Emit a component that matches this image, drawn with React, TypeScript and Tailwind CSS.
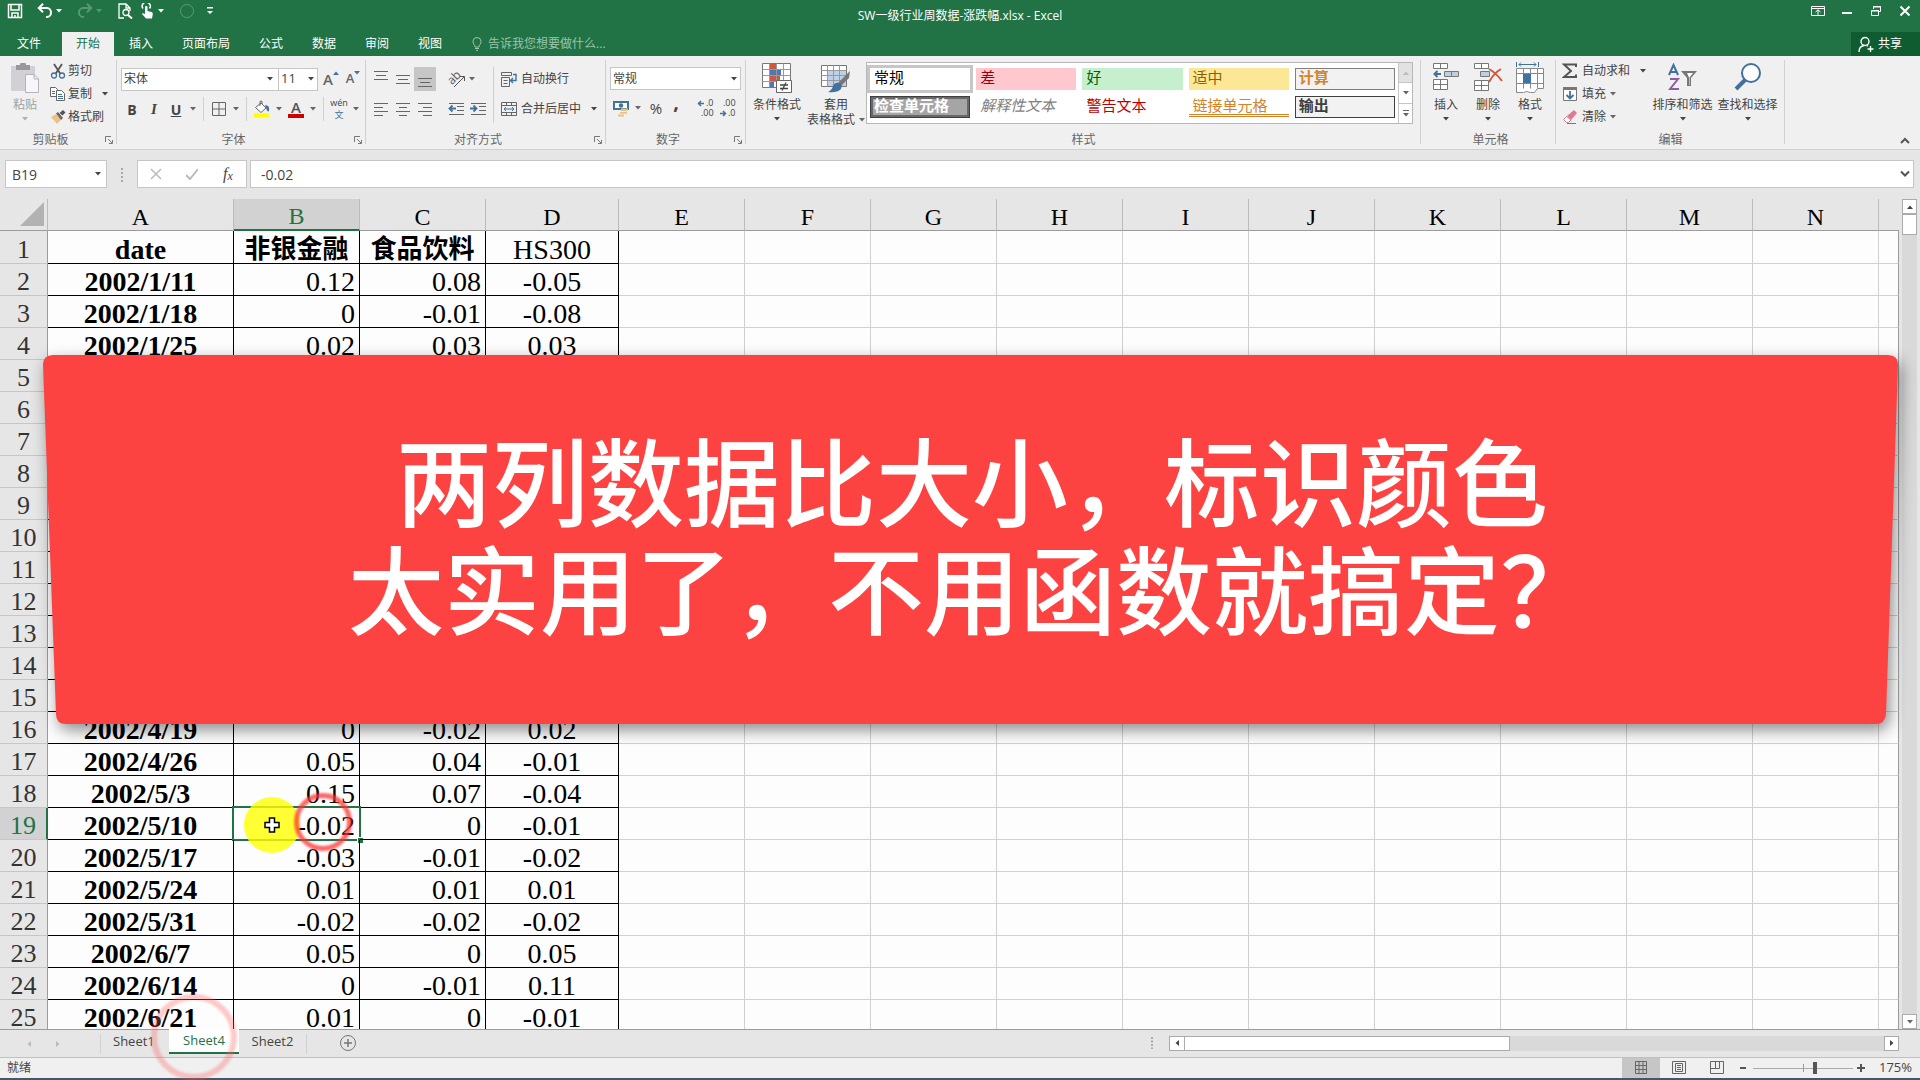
import React from 'react';

const COLUMNS = [
  { name: 'A', width: 'w-[186px]' },
  { name: 'B', width: 'w-[126px]' },
  { name: 'C', width: 'w-[126px]' },
  { name: 'D', width: 'w-[133px]' },
  { name: 'E', width: 'w-[126px]' },
  { name: 'F', width: 'w-[126px]' },
  { name: 'G', width: 'w-[126px]' },
  { name: 'H', width: 'w-[126px]' },
  { name: 'I', width: 'w-[126px]' },
  { name: 'J', width: 'w-[126px]' },
  { name: 'K', width: 'w-[126px]' },
  { name: 'L', width: 'w-[126px]' },
  { name: 'M', width: 'w-[126px]' },
  { name: 'N', width: 'w-[126px]' },
];

const ROWS: Record<number, string[]> = {
  1: ['date', '非银金融', '食品饮料', 'HS300'],
  2: ['2002/1/11', '0.12', '0.08', '-0.05'],
  3: ['2002/1/18', '0', '-0.01', '-0.08'],
  4: ['2002/1/25', '0.02', '0.03', '0.03'],
  16: ['2002/4/19', '0', '-0.02', '0.02'],
  17: ['2002/4/26', '0.05', '0.04', '-0.01'],
  18: ['2002/5/3', '0.15', '0.07', '-0.04'],
  19: ['2002/5/10', '-0.02', '0', '-0.01'],
  20: ['2002/5/17', '-0.03', '-0.01', '-0.02'],
  21: ['2002/5/24', '0.01', '0.01', '0.01'],
  22: ['2002/5/31', '-0.02', '-0.02', '-0.02'],
  23: ['2002/6/7', '0.05', '0', '0.05'],
  24: ['2002/6/14', '0', '-0.01', '0.11'],
  25: ['2002/6/21', '0.01', '0', '-0.01'],
};

const ROW_NUMBERS = Array.from({ length: 25 }, (_, i) => i + 1);

const Caret: React.FC<{ className?: string }> = ({ className = 'text-[#666]' }) => (
  <svg viewBox="0 0 6 4" className={`w-1.5 h-1 shrink-0 ${className}`}>
    <path d="M0 0h6L3 3.5z" fill="currentColor" />
  </svg>
);

const Sep: React.FC<{ className?: string }> = ({ className = 'h-6' }) => (
  <div className={`w-px shrink-0 bg-[#d0d0d0] ${className}`} />
);

interface IconButtonProps {
  label: string;
  className?: string;
  children: React.ReactNode;
}

const IconButton: React.FC<IconButtonProps> = ({ label, className = 'w-[22px]', children }) => (
  <button aria-label={label} className={`flex h-6 shrink-0 items-center justify-center ${className}`}>
    {children}
  </button>
);

interface GroupProps {
  title: string;
  className: string;
  launcher?: boolean;
  children: React.ReactNode;
}

const Group: React.FC<GroupProps> = ({ title, className, launcher, children }) => (
  <section className={`relative flex shrink-0 flex-col pt-[3px] ${className}`}>
    <div className="flex h-[73px]">{children}</div>
    <div className="flex h-4 items-center text-[#666]">
      <h2 className="flex-1 text-center">{title}</h2>
      {launcher && (
        <button aria-label={`${title}设置`} className="w-4 pl-1">
          <svg viewBox="0 0 8 8" className="w-2 h-2" fill="none" stroke="#777">
            <path d="M.5 6V.5H6M3 3l4 4M7.5 4v3.5H4" />
          </svg>
        </button>
      )}
    </div>
    <Sep className="absolute right-0 top-1 h-[84px]" />
  </section>
);

const LineIcon: React.FC<{ d: string }> = ({ d }) => (
  <svg viewBox="0 0 16 16" className="w-4 h-4" fill="none" stroke="#666">
    <path d={d} />
  </svg>
);

const TitleBar: React.FC = () => (
  <div className="relative flex h-8 items-start justify-between text-white">
    <div className="flex h-[22px] items-center pl-1">
      <IconButton label="保存">
        <svg viewBox="0 0 16 16" className="w-4 h-4" fill="none" stroke="white" strokeWidth="1.5">
          <path d="M1.5 1.5h13v13h-13zM4 1.5v5.5h8V1.5M5 14.5V10h6v4.5M8 12v2.5" />
        </svg>
      </IconButton>
      <IconButton label="撤消" className="ml-2 w-[22px]">
        <svg viewBox="0 0 16 16" className="w-4 h-4" fill="none" stroke="white" strokeWidth="2">
          <path d="M1.5 5H10a4 4.5 0 0 1 0 9H9M6 .8L1.8 5 6 9.2" />
        </svg>
      </IconButton>
      <Caret className="text-white" />
      <IconButton label="恢复" className="ml-3 w-[22px] opacity-25">
        <svg viewBox="0 0 16 16" className="w-4 h-4" fill="none" stroke="white" strokeWidth="2">
          <path d="M14.5 5H6a4 4.5 0 0 0 0 9h1M10 .8L14.2 5 10 9.2" />
        </svg>
      </IconButton>
      <Caret className="text-white/25" />
      <IconButton label="打印预览" className="ml-3 w-[22px]">
        <svg viewBox="0 0 16 16" className="w-4 h-4" fill="none" stroke="white" strokeWidth="1.3">
          <path d="M7 15H2V1h7l4 4v3M9 1v4h4" />
          <circle cx="9" cy="9.5" r="3" />
          <path d="M11 12l4 3.5" strokeWidth="2" />
        </svg>
      </IconButton>
      <IconButton label="触摸模式">
        <svg viewBox="0 0 14 16" className="w-3.5 h-4">
          <path d="M3 5.5a4 4 0 1 1 6.5 0" fill="none" stroke="white" strokeWidth="1.5" />
          <path d="M5 3.5q1.3-1.2 2.5 0V8l4 1q1.5.5 1.3 2L12 15.5H6L2 11q.5-1.5 3 0z" fill="white" />
        </svg>
      </IconButton>
      <Caret className="text-white" />
      <IconButton label="形状" className="ml-3 w-[22px] opacity-25">
        <span className="h-3.5 w-3.5 rounded-full border border-white" />
      </IconButton>
      <IconButton label="自定义快速访问工具栏" className="ml-px w-[22px]">
        <svg viewBox="0 0 8 8" className="w-2 h-2" fill="white">
          <path d="M1 0h6v1.5H1zM1 4h6L4 7z" />
        </svg>
      </IconButton>
    </div>
    <h1 className="absolute left-1/2 top-2 -translate-x-1/2 leading-4">SW一级行业周数据-涨跌幅.xlsx - Excel</h1>
    <div className="flex h-[22px] items-center gap-[7px] pr-1">
      <IconButton label="功能区显示选项">
        <svg viewBox="0 0 14 12" className="w-3.5 h-3" fill="none" stroke="white">
          <path d="M.5 1.5h13v9H.5zM.5 3.5h13M7 10V5M4.5 7L7 4.8 9.5 7" />
        </svg>
      </IconButton>
      <IconButton label="最小化">
        <svg viewBox="0 0 10 10" className="w-2.5 h-2.5"><path d="M0 6h10v2H0z" fill="white" /></svg>
      </IconButton>
      <IconButton label="还原">
        <svg viewBox="0 0 12 12" className="w-3 h-3" fill="none" stroke="white">
          <path d="M3.5 4V1.5h7v5H8M3 2h8M1.5 5.5h7v5h-7zM1 6h8" />
        </svg>
      </IconButton>
      <IconButton label="关闭">
        <svg viewBox="0 0 12 12" className="w-3 h-3"><path d="M1.5 1.5l9 9M10.5 1.5l-9 9" stroke="white" strokeWidth="2" /></svg>
      </IconButton>
    </div>
  </div>
);

const TabBar: React.FC = () => (
  <div className="flex h-6 items-stretch text-white">
    <button className="mr-1 w-[58px]">文件</button>
    <nav className="flex gap-px">
      <button className="bg-[#f0f0f0] px-3.5 text-[#217346]">开始</button>
      {['插入', '页面布局', '公式', '数据', '审阅', '视图'].map((tab) => (
        <button key={tab} className="px-3.5">{tab}</button>
      ))}
    </nav>
    <label className="ml-4 flex items-center gap-1.5 text-[#9cc4ab]">
      <svg viewBox="0 0 10 14" className="w-2.5 h-3.5" fill="none" stroke="currentColor">
        <path d="M3 10C3 8 1 7 1 4.5a4 4 0 0 1 8 0C9 7 7 8 7 10zM3 11.5h4M4 13.3h2" />
      </svg>
      <input placeholder="告诉我您想要做什么..." className="w-36 bg-transparent outline-none placeholder:text-[#9cc4ab]" />
    </label>
    <button className="ml-auto flex w-[69px] items-center gap-1 bg-[#0e5c2f] pl-[7px]">
      <svg viewBox="0 0 16 16" className="w-4 h-4" fill="none" stroke="white" strokeWidth="1.4">
        <circle cx="7" cy="5.5" r="4" />
        <path d="M1 16c0-4 2-6 5-6.5M9 9.5l1 .5M12.5 10v6M9.5 13h6" />
      </svg>
      共享
    </button>
  </div>
);

const ClipboardGroup: React.FC = () => (
  <Group title="剪贴板" className="w-[117px]" launcher>
    <button className="flex w-[50px] flex-col items-center pt-1 text-[#a0a0a0]">
      <svg viewBox="0 0 30 30" className="w-[30px] h-[30px]">
        <path d="M1 3h24v25H1z" fill="#d2d0d4" />
        <path d="M6 2h4a3 3 0 0 1 6 0h4v5H6z" fill="#99979b" />
        <path d="M15.5 11.5H24l4.5 4.5v13.5h-13z" fill="#f8f6fa" stroke="#b5b2b8" />
        <path d="M24 11.5V16h4.5" fill="none" stroke="#b5b2b8" />
      </svg>
      <span className="mt-1 leading-4">粘贴</span>
      <Caret className="mt-1 text-[#b0b0b0]" />
    </button>
    <div className="flex flex-col">
      <button className="flex h-[23px] items-center gap-0.5">
        <svg viewBox="0 0 16 16" className="w-4 h-4" fill="none">
          <path d="M4 1l6.5 10M12 1L5.5 11" stroke="#555" strokeWidth="1.8" />
          <circle cx="4" cy="12.5" r="2.5" stroke="#41719c" strokeWidth="1.3" />
          <circle cx="12" cy="12.5" r="2.5" stroke="#41719c" strokeWidth="1.3" />
        </svg>
        剪切
      </button>
      <button className="flex h-[23px] items-center gap-0.5">
        <svg viewBox="0 0 16 16" className="w-4 h-4" fill="#fff" stroke="#666">
          <path d="M.5 1.5h5l2 2v7h-7zM2 5.5h3M2 7.5h3" />
          <path d="M6.5 4.5h5l3 3v7h-8z" />
          <path d="M8 8.5h4M8 10.5h5M8 12.5h5" stroke="#41719c" />
        </svg>
        复制
        <Caret className="ml-2" />
      </button>
      <button className="flex h-[23px] items-center gap-0.5">
        <svg viewBox="0 0 16 16" className="w-4 h-4">
          <path d="M1 8l5-3 5 6-4 4z" fill="#edc182" />
          <path d="M6 4.5l2-1.5 5 6-2 2z" fill="#666" />
          <path d="M9.5 4L13 1l2.5 2.5-3 3z" fill="#555" />
        </svg>
        格式刷
      </button>
    </div>
  </Group>
);

const FontGroup: React.FC = () => (
  <Group title="字体" className="w-[249px]" launcher>
    <div className="flex flex-col pl-1 pt-2">
      <div className="flex items-center">
        <div className="relative flex items-center">
          <select aria-label="字体名称" className="h-[23px] w-[158px] appearance-none border border-[#c6c6c6] bg-white px-0.5 outline-none">
            <option>宋体</option>
          </select>
          <Caret className="pointer-events-none absolute right-1.5" />
        </div>
        <div className="relative -ml-px flex items-center">
          <select aria-label="字号" className="h-[23px] w-10 appearance-none border border-[#c6c6c6] bg-white px-0.5 text-[13px] outline-none">
            <option>11</option>
          </select>
          <Caret className="pointer-events-none absolute right-1" />
        </div>
        <IconButton label="增大字号" className="ml-0.5 w-[22px] text-[15px] font-semibold text-[#666]">
          A<Caret className="mb-3 rotate-180 text-[#41719c]" />
        </IconButton>
        <IconButton label="减小字号" className="w-[22px] text-[13px] font-semibold text-[#666]">
          A<Caret className="mb-3 text-[#41719c]" />
        </IconButton>
      </div>
      <div className="flex items-center pt-1.5 text-[14px]">
        <IconButton label="加粗"><b>B</b></IconButton>
        <IconButton label="倾斜"><i className="font-['Liberation_Serif',serif] text-[15px] font-bold">I</i></IconButton>
        <IconButton label="下划线"><u className="font-bold">U</u></IconButton>
        <IconButton label="下划线选项" className="w-3"><Caret /></IconButton>
        <Sep className="mx-1 h-6" />
        <IconButton label="边框">
          <svg viewBox="0 0 14 14" className="w-3.5 h-3.5" fill="none" stroke="#666">
            <path d="M.5.5h13v13H.5zM7 .5v13M.5 7h13" />
          </svg>
        </IconButton>
        <IconButton label="边框选项" className="w-3"><Caret /></IconButton>
        <Sep className="mx-1 h-6" />
        <IconButton label="填充颜色">
          <svg viewBox="0 0 18 18" className="w-[18px] h-[18px]">
            <path d="M2.5 7.5L8 3l5 5-5 4.5z" fill="#fff" stroke="#666" />
            <path d="M7 6V1.5a1.5 1.5 0 0 1 2 0V4" fill="none" stroke="#666" />
            <path d="M12 5q5 0 4 6-1 1-2-.5z" fill="#41719c" />
            <path d="M1 13.5h15V17.5H1z" fill="#ffff00" />
          </svg>
        </IconButton>
        <IconButton label="填充颜色选项" className="w-3"><Caret /></IconButton>
        <IconButton label="字体颜色">
          <span className="w-4 border-b-4 border-[#d00000] text-center text-[15px] font-semibold leading-[14px] text-[#555]">A</span>
        </IconButton>
        <IconButton label="字体颜色选项" className="w-3"><Caret /></IconButton>
        <Sep className="mx-1 h-6" />
        <IconButton label="拼音指南">
          <span className="flex flex-col text-center text-[9px] leading-3">
            <span>wén</span>
            <span className="text-[#41719c]">文</span>
          </span>
        </IconButton>
        <IconButton label="拼音指南选项" className="w-3"><Caret /></IconButton>
      </div>
    </div>
  </Group>
);

const AlignGroup: React.FC = () => (
  <Group title="对齐方式" className="w-[240px]" launcher>
    <div className="flex flex-col gap-1.5 pl-1 pt-2">
      <div className="flex items-center">
        <IconButton label="顶端对齐"><LineIcon d="M1 .5h14M3 4.5h10M1 8.5h14" /></IconButton>
        <IconButton label="垂直居中"><LineIcon d="M1 4.5h14M3 8.5h10M1 12.5h14" /></IconButton>
        <IconButton label="底端对齐" className="w-[22px] bg-[#c6c6c6]"><LineIcon d="M1 7.5h14M3 11.5h10M1 15.5h14" /></IconButton>
        <Sep className="mx-1" />
        <IconButton label="方向" className="w-6">
          <svg viewBox="0 0 18 18" className="w-[18px] h-[18px] overflow-visible">
            <text x="0" y="12" fontSize="12" fill="#555" transform="rotate(-45 6 9)">ab</text>
            <path d="M6 17L16 7M12 6.5h4.5V11" fill="none" stroke="#555" />
          </svg>
        </IconButton>
        <Caret />
      </div>
      <div className="flex items-center">
        <IconButton label="左对齐"><LineIcon d="M1 2.5h14M1 6.5h9M1 10.5h14M1 14.5h9" /></IconButton>
        <IconButton label="居中"><LineIcon d="M1 2.5h14M4 6.5h8M1 10.5h14M4 14.5h8" /></IconButton>
        <IconButton label="右对齐"><LineIcon d="M1 2.5h14M6 6.5h9M1 10.5h14M6 14.5h9" /></IconButton>
        <Sep className="mx-1" />
        <IconButton label="减少缩进量">
          <svg viewBox="0 0 16 14" className="w-4 h-3.5" fill="none" stroke="#666">
            <path d="M1 1.5h15M9 4.5h7M9 8.5h7M1 12.5h15" />
            <path d="M8 6.5H2M4.5 3.5l-3 3 3 3" stroke="#41719c" strokeWidth="1.8" />
          </svg>
        </IconButton>
        <IconButton label="增加缩进量">
          <svg viewBox="0 0 16 14" className="w-4 h-3.5" fill="none" stroke="#666">
            <path d="M1 1.5h15M9 4.5h7M9 8.5h7M1 12.5h15" />
            <path d="M0 6.5h6M3.5 3.5l3 3-3 3" stroke="#41719c" strokeWidth="1.8" />
          </svg>
        </IconButton>
      </div>
    </div>
    <Sep className="ml-1 mt-2 h-14" />
    <div className="flex flex-col gap-1.5 pl-[7px] pt-2">
      <button className="flex h-6 items-center gap-1">
        <svg viewBox="0 0 16 16" className="w-4 h-4" fill="none" stroke="#666">
          <path d="M.5 1.5h10v3H.5zM.5 6.5h8v9h-8zM2.5 9.5h4M2.5 12.5h4" />
          <path d="M12 3.5h3v6h-5M12 7l-2.5 2.5L12 12" stroke="#41719c" strokeWidth="1.4" />
        </svg>
        自动换行
      </button>
      <button className="flex h-6 items-center gap-1">
        <svg viewBox="0 0 16 16" className="w-4 h-4" fill="none" stroke="#666">
          <path d="M.5 1.5h15v13H.5zM.5 4.5h15M.5 11.5h15M5.5 1.5v3M10.5 1.5v3M5.5 11.5v3M10.5 11.5v3" />
          <path d="M3 8h10M5 6L3 8l2 2M11 6l2 2-2 2" stroke="#41719c" />
        </svg>
        合并后居中
        <Caret className="ml-1.5" />
      </button>
    </div>
  </Group>
);

const NumberGroup: React.FC = () => (
  <Group title="数字" className="w-[140px]" launcher>
    <div className="flex flex-col gap-1.5 pl-1 pt-2">
      <div className="relative flex items-center">
        <select aria-label="数字格式" className="h-[23px] w-[131px] appearance-none border border-[#c6c6c6] bg-white px-0.5 outline-none">
          <option>常规</option>
        </select>
        <Caret className="pointer-events-none absolute right-1" />
      </div>
      <div className="flex items-center">
        <IconButton label="会计数字格式">
          <svg viewBox="0 0 18 18" className="w-[18px] h-[18px]">
            <path d="M1 2h16v9H1z" fill="#41719c" />
            <path d="M3 4h12v5H3z" fill="#fff" />
            <circle cx="9" cy="6.5" r="2.2" fill="#41719c" />
            <path d="M9 9.5h7v2.5H9zM8 13h7v1.8H8zM6 15.5h6v2H6z" fill="#edc182" />
          </svg>
        </IconButton>
        <IconButton label="会计格式选项" className="w-3"><Caret /></IconButton>
        <IconButton label="百分比样式" className="ml-0.5 w-5 text-[15px]">%</IconButton>
        <IconButton label="千位分隔样式" className="w-5 pb-3 text-[20px] font-bold">,</IconButton>
        <Sep className="mx-1" />
        <IconButton label="增加小数位数">
          <svg viewBox="0 0 20 24" className="w-5 h-6 overflow-visible" fontSize="9" fill="#444">
            <path d="M8 7.5H3M5 5L2.5 7.5 5 10" fill="none" stroke="#41719c" strokeWidth="1.5" />
            <text x="10" y="10">.0</text>
            <text x="5" y="20">.00</text>
          </svg>
        </IconButton>
        <IconButton label="减少小数位数">
          <svg viewBox="0 0 20 24" className="w-5 h-6 overflow-visible" fontSize="9" fill="#444">
            <text x="5" y="10">.00</text>
            <path d="M2 17.5h5M5 15l2.5 2.5L5 20" fill="none" stroke="#41719c" strokeWidth="1.5" />
            <text x="10" y="20">.0</text>
          </svg>
        </IconButton>
      </div>
    </div>
  </Group>
);

const STYLES = [
  { name: '常规', className: 'border-transparent bg-white text-black outline-[3px] outline-[#c6c6c6]' },
  { name: '差', className: 'border-transparent bg-[#ffc7ce] text-[#9c0006]' },
  { name: '好', className: 'border-transparent bg-[#c6efce] text-[#006100]' },
  { name: '适中', className: 'border-transparent bg-[#fbe796] text-[#8c6000]' },
  { name: '计算', className: 'border-[#7f7f7f] bg-[#f2f2f2] font-bold text-[#d5832b]' },
  { name: '检查单元格', className: 'border-[#3f3f3f] bg-[#a5a5a5] font-bold text-white inset-ring-2 inset-ring-[#3f3f3f]/60' },
  { name: '解释性文本', className: 'border-transparent italic text-[#7f7f7f]' },
  { name: '警告文本', className: 'border-transparent text-[#c00000]' },
  { name: '链接单元格', className: 'border-transparent text-[#d5832b]', underline: true },
  { name: '输出', className: 'border-[#3f3f3f] bg-[#f2f2f2] font-bold text-[#3f3f3f]' },
];

const StylesGroup: React.FC = () => (
  <Group title="样式" className="w-[675px]">
    <button className="ml-1 flex w-[54px] flex-col items-center pt-1">
      <svg viewBox="0 0 30 30" className="w-[30px] h-[30px]">
        <path d="M.5.5h28v24H.5z" fill="#fff" stroke="#777" />
        <path d="M8 1h6v5H8zM8 13h10v5H8z" fill="#d0583c" />
        <path d="M8 7h11v5H8zM8 19h4v5H8z" fill="#4a7ab5" />
        <path d="M.5 6.5h28M.5 12.5h28M.5 18.5h28M7.5.5v24M14.5.5v24M21.5.5v24" stroke="#999" fill="none" />
        <path d="M14.5 17.5h15v12h-15z" fill="#fff" stroke="#666" />
        <path d="M18 22h8M18 25.5h8M24 19.5l-4 8" stroke="#444" strokeWidth="1.3" />
      </svg>
      <span className="mt-1 whitespace-nowrap leading-4">条件格式</span>
      <Caret className="mt-1" />
    </button>
    <button className="ml-0.5 flex w-[60px] flex-col items-center pt-1">
      <svg viewBox="0 0 30 30" className="w-[30px] h-[30px]">
        <path d="M.5 2.5h25v21H.5z" fill="#fff" stroke="#777" />
        <path d="M6 8h19v15H6z" fill="#bdd2e8" />
        <path d="M.5 7.5h25M.5 12.5h25M.5 17.5h25M6.5 2.5v21M12.5 2.5v21M18.5 2.5v21" stroke="#999" fill="none" />
        <path d="M29 8l-1 7-8 8-3-3z" fill="#777" />
        <path d="M18 20q4 1 2 6-4 4-13 3 4-2 5-6 2-4 6-3z" fill="#41719c" />
      </svg>
      <span className="mt-1 leading-4">套用</span>
      <span className="-mt-px flex items-center gap-1 whitespace-nowrap leading-4">表格格式<Caret /></span>
    </button>
    <div className="mr-2 mt-[3px] flex h-[62px] flex-1 border border-[#b8b8b8] bg-white">
      <div className="grid flex-1 grid-cols-5 grid-rows-2 gap-1.5 px-[3px] py-[5px]">
        {STYLES.map((s) => (
          <button key={s.name} className={`flex flex-col items-start justify-between border px-[3px] text-[15px] leading-4 ${s.className}`}>
            {s.name}
            {s.underline && <span className="-mx-1 h-[3px] self-stretch border-y border-[#d5832b]" />}
          </button>
        ))}
      </div>
      <div className="flex w-3.5 flex-col border-l border-[#c6c6c6]">
        <button aria-label="向上" className="flex flex-1 items-center justify-center bg-[#e2e2e2]"><Caret className="rotate-180 text-[#bbb]" /></button>
        <button aria-label="向下" className="flex flex-1 items-center justify-center border-y border-[#c6c6c6]"><Caret /></button>
        <button aria-label="其他" className="flex flex-1 flex-col items-center justify-center gap-0.5"><span className="h-px w-1.5 bg-[#666]" /><Caret /></button>
      </div>
    </div>
  </Group>
);

const BigButton: React.FC<{ text: string; className: string; children: React.ReactNode }> = ({ text, className, children }) => (
  <button className={`flex shrink-0 flex-col items-center pt-1 ${className}`}>
    {children}
    <span className="mt-1 whitespace-nowrap leading-4">{text}</span>
    <Caret className="mt-1" />
  </button>
);

const CellsGroup: React.FC = () => (
  <Group title="单元格" className="w-[135px] pl-1">
    <BigButton text="插入" className="w-[42px]">
      <svg viewBox="0 0 30 30" className="w-[30px] h-[30px]" fill="#fff" stroke="#777">
        <path d="M2.5.5h14v5h-14zM9.5.5v5M2.5 16.5h14v10h-14zM9.5 16.5v10M2.5 21.5h14" />
        <path d="M13.5 8.5h14v5h-14zM20.5 8.5v5" fill="#bdcfe0" />
        <path d="M10 11H4M6.5 8L3.5 11l3 3" fill="none" stroke="#41719c" strokeWidth="2" />
      </svg>
    </BigButton>
    <BigButton text="删除" className="w-[42px]">
      <svg viewBox="0 0 30 30" className="w-[30px] h-[30px]" fill="#fff" stroke="#777">
        <path d="M1.5.5h14v5h-14zM8.5.5v5M1.5 17.5h14v10h-14zM8.5 17.5v10M1.5 22.5h14" />
        <path d="M7.5 8.5h9v5h-9z" fill="#bdcfe0" />
        <path d="M16 6q7 4 13 12M28 6q-7 4-12 13" fill="none" stroke="#d0583c" strokeWidth="2" />
      </svg>
    </BigButton>
    <BigButton text="格式" className="w-[42px]">
      <svg viewBox="0 0 30 30" className="w-[30px] h-[30px] overflow-visible" fill="#fff" stroke="#888">
        <path d="M1.5 5.5h27v20h-6l-3 4h-4l-4-1-3 1h-7z" />
        <path d="M1.5 10.5h27M1.5 20.5h27M8.5 5.5v20M15.5 5.5v20M22.5 5.5v20" fill="none" />
        <path d="M8 11h8v9H8z" fill="#41719c" stroke="none" />
        <path d="M1.5-1v5M23.5-1v5M4 1.5h17M6-.5L4 1.5l2 2M19-.5l2 2-2 2" fill="none" stroke="#41719c" />
      </svg>
    </BigButton>
  </Group>
);

const EditGroup: React.FC = () => (
  <Group title="编辑" className="w-[229px]">
    <div className="flex w-[94px] flex-col pl-1.5">
      <button className="flex h-[23px] items-center gap-1">
        <svg viewBox="0 0 16 16" className="w-4 h-4" fill="none" stroke="#555" strokeWidth="2">
          <path d="M14 4V1.5H2L9 8l-7 6h12v-2.5" />
        </svg>
        自动求和
        <Caret className="ml-1.5" />
      </button>
      <button className="flex h-[23px] items-center gap-1">
        <svg viewBox="0 0 16 16" className="w-4 h-4">
          <path d="M1.5 1.5h13v13h-13z" fill="#fff" stroke="#777" />
          <path d="M1 1h14v3H1z" fill="#777" />
          <path d="M8 5v7M4.5 9L8 12.5 11.5 9" fill="none" stroke="#41719c" strokeWidth="1.8" />
        </svg>
        填充
        <Caret />
      </button>
      <button className="flex h-[23px] items-center gap-1">
        <svg viewBox="0 0 16 16" className="w-4 h-4">
          <path d="M5 7l7-6 3 3-6 7z" fill="#e07a92" />
          <path d="M4.5 7.5L1.5 10.5l3 3h2l2.5-2.5z" fill="#fff" stroke="#e07a92" />
          <path d="M5 14.5h9" stroke="#777" />
        </svg>
        清除
        <Caret />
      </button>
    </div>
    <BigButton text="排序和筛选" className="w-[65px]">
      <svg viewBox="0 0 30 30" className="w-[30px] h-[30px]" fill="none">
        <path d="M1 12L5.5 2 10 12M2.5 9h6" stroke="#41719c" strokeWidth="2" />
        <path d="M2 16h8L2 26h9" stroke="#8e5ba8" strokeWidth="2" />
        <path d="M13 8h16l-6 7v8h-4v-8z" fill="#777" />
        <path d="M19 10h6l-3.5 4.5V22h-.5v-7.5z" fill="#fff" />
      </svg>
    </BigButton>
    <BigButton text="查找和选择" className="w-[65px]">
      <svg viewBox="0 0 30 30" className="w-[30px] h-[30px]">
        <path d="M12 17L3 26" stroke="#41719c" strokeWidth="4" />
        <circle cx="18" cy="10" r="9" fill="#fff" stroke="#41719c" strokeWidth="2" />
      </svg>
    </BigButton>
  </Group>
);

const FormulaBar: React.FC = () => (
  <div className="flex h-[49px] shrink-0 items-start pl-[5px] pr-1.5 pt-2.5 text-[#444]">
    <div className="relative flex items-center">
      <input aria-label="名称框" defaultValue="B19" className="h-7 w-[102px] border border-[#c6c6c6] bg-white px-1.5 text-[14px] outline-none" />
      <Caret className="absolute right-1.5" />
    </div>
    <svg viewBox="0 0 2 14" className="mx-3.5 mt-2 w-0.5 h-3.5" fill="#aaa">
      <path d="M0 0h2v2H0zM0 4h2v2H0zM0 8h2v2H0zM0 12h2v2H0z" />
    </svg>
    <div className="flex h-7 w-[110px] items-center border border-[#c6c6c6] bg-white">
      <IconButton label="取消" className="w-9">
        <svg viewBox="0 0 12 12" className="w-3 h-3"><path d="M1 1l10 10M11 1L1 11" stroke="#bbb" strokeWidth="1.5" /></svg>
      </IconButton>
      <IconButton label="输入" className="w-9">
        <svg viewBox="0 0 12 12" className="w-3 h-3"><path d="M0 7l4 4 8-10" fill="none" stroke="#bbb" strokeWidth="2" /></svg>
      </IconButton>
      <IconButton label="插入函数" className="w-9 font-['Liberation_Serif',serif] text-[16px] italic">
        f<span className="pt-1 text-[12px]">x</span>
      </IconButton>
    </div>
    <div className="relative ml-[3px] flex flex-1 items-center">
      <input aria-label="编辑栏" defaultValue="-0.02" className="h-7 w-full border border-[#c6c6c6] bg-white px-2.5 text-[14px] outline-none" />
      <button aria-label="展开编辑栏" className="absolute right-1">
        <svg viewBox="0 0 10 8" className="w-2.5 h-2"><path d="M1 1.5l4 4 4-4" fill="none" stroke="#555" strokeWidth="2" /></svg>
      </button>
    </div>
  </div>
);

const CELL_ALIGN = ['text-center font-bold', 'text-right', 'text-right', 'text-center'];

const cellStyle = (row: number, col: number) => {
  if (col > 3) return 'border-[#d0d0d0]';
  if (row === 1) return col < 3 ? 'border-black text-center font-bold' : 'border-black text-center';
  return `border-black ${CELL_ALIGN[col]}`;
};

const Sheet: React.FC = () => (
  <table className="w-full table-fixed border-separate border-spacing-0 bg-[#fdfdfd] font-['Liberation_Serif','Noto_Sans_CJK_SC',serif] text-[28px] leading-[27px] text-black">
    <colgroup>
      <col className="w-12" />
      {COLUMNS.map((c) => <col key={c.name} className={c.width} />)}
      <col />
    </colgroup>
    <thead>
      <tr className="h-[31px] bg-[#e6e6e6] text-[24px]">
        <th className="border-b border-r border-[#9b9b9b] border-r-[#bbb] p-0 align-bottom">
          <svg viewBox="0 0 24 24" className="mb-1 ml-auto mr-[3px] w-6 h-6"><path d="M24 0v24H0z" fill="#b2b2b2" /></svg>
        </th>
        {COLUMNS.map((c) => (
          <th
            key={c.name}
            className={`border-r border-r-[#bbb] p-0 pt-1 font-normal leading-[26px] ${
              c.name === 'B' ? 'border-b-2 border-b-[#217346] bg-[#d2d2d2] text-[#217346]' : 'border-b border-b-[#9b9b9b]'
            }`}
          >
            {c.name}
          </th>
        ))}
        <th className="border-b border-[#9b9b9b] p-0" />
      </tr>
    </thead>
    <tbody>
      {ROW_NUMBERS.map((row) => (
        <tr key={row} className="h-8">
          <th
            className={`border-b border-b-[#c6c6c6] p-0 pt-1 text-[26px] font-normal ${
              row === 19 ? 'border-r-2 border-r-[#217346] bg-[#d2d2d2] text-[#217346]' : 'border-r border-r-[#9b9b9b] bg-[#e6e6e6] text-[#333]'
            }`}
          >
            {row}
          </th>
          {COLUMNS.map((c, col) => (
            <td key={c.name} className={`relative whitespace-nowrap border-b border-r p-0 px-1 pt-1 ${cellStyle(row, col)}`}>
              {row === 1 && (col === 1 || col === 2) ? <span className="text-[26px]">{ROWS[1][col]}</span> : ROWS[row]?.[col]}
              {row === 19 && col === 1 && (
                <>
                  <span className="absolute -inset-0.5 border-2 border-[#217346]" />
                  <span className="absolute -bottom-1 -right-1 h-1.5 w-1.5 border-l border-t border-white bg-[#217346]" />
                </>
              )}
            </td>
          ))}
          <td className="border-b border-r border-[#d0d0d0] border-r-[#9b9b9b] p-0" />
        </tr>
      ))}
    </tbody>
  </table>
);

const VerticalScroll: React.FC = () => (
  <div className="mx-[3px] flex w-[15px] shrink-0 flex-col bg-[#d9d9d9]">
    <button aria-label="向上滚动" className="flex h-[15px] items-center justify-center border border-[#ababab] bg-white"><Caret className="rotate-180" /></button>
    <div className="h-[21px] border border-[#ababab] bg-white" />
    <button aria-label="向下滚动" className="mt-auto flex h-[15px] items-center justify-center border border-[#ababab] bg-white"><Caret /></button>
  </div>
);

const Banner: React.FC = () => (
  <div className="absolute inset-x-0 top-[156px] flex h-[369px] flex-col items-center justify-center pb-2 pl-6 text-[96px] font-medium leading-[108px] text-white">
    <svg viewBox="0 0 1920 369" preserveAspectRatio="none" className="absolute inset-0 h-full w-full overflow-visible drop-shadow-[3px_6px_8px_rgba(0,0,0,0.45)]">
      <path d="M53 0H1888Q1898 0 1898 10L1886 359Q1885 369 1876 369H66Q56 369 56 359L43 10Q43 0 53 0z" fill="#fd4242" />
    </svg>
    <p className="relative whitespace-nowrap">两列数据比大小，标识颜色</p>
    <p className="relative whitespace-nowrap">太实用了，不用函数就搞定？</p>
  </div>
);

const SheetTabs: React.FC = () => (
  <div className="flex h-7 shrink-0 items-start border-t border-[#9b9b9b] text-[13px] text-[#444]">
    <div className="flex h-7 w-[100px] items-center gap-[23px] pl-[26px]">
      <button aria-label="上一个工作表"><Caret className="rotate-90 text-[#bbb]" /></button>
      <button aria-label="下一个工作表"><Caret className="-rotate-90 text-[#bbb]" /></button>
    </div>
    <Sep className="mt-1 h-5 bg-[#ababab]" />
    <button className="h-6 w-[68px] pl-3 text-left">Sheet1</button>
    <button className="-mt-px h-[25px] w-[70px] border-b-2 border-[#217346] bg-white text-[#217346]">Sheet4</button>
    <button className="h-6 w-[67px]">Sheet2</button>
    <Sep className="mt-1 h-5 bg-[#ababab]" />
    <button aria-label="新工作表" className="ml-[33px] mt-[5px]">
      <svg viewBox="0 0 16 16" className="w-4 h-4" fill="none" stroke="#777">
        <circle cx="8" cy="8" r="7.5" />
        <path d="M8 4v8M4 8h8" strokeWidth="1.5" />
      </svg>
    </button>
    <div className="ml-auto flex h-[26px] w-[748px] items-center">
      <svg viewBox="0 0 2 12" className="mr-4 w-0.5 h-3" fill="#aaa">
        <path d="M0 0h2v2H0zM0 3.5h2v2H0zM0 7h2v2H0zM0 10.5h2v1.5H0z" />
      </svg>
      <button aria-label="向左滚动" className="flex h-[15px] w-4 items-center justify-center border border-[#ababab] bg-white"><Caret className="rotate-90" /></button>
      <div className="flex h-[15px] flex-1 bg-[#d9d9d9]"><div className="w-[325px] border border-l-0 border-[#ababab] bg-white" /></div>
      <button aria-label="向右滚动" className="flex h-[15px] w-[15px] items-center justify-center border border-[#ababab] bg-white"><Caret className="-rotate-90" /></button>
    </div>
    <div className="w-[21px] shrink-0" />
  </div>
);

const StatusBar: React.FC = () => (
  <footer className="flex h-[23px] shrink-0 items-stretch border-b-2 border-t border-b-[#4a5568] border-t-[#c0c0c0] bg-[#f0f0f0] text-[#444]">
    <span className="pl-[7px] leading-5">就绪</span>
    <div className="ml-auto flex items-center pr-2">
      <IconButton label="普通" className="w-[38px] max-h-full bg-[#c6c6c6]">
        <LineIcon d="M2.5 1.5h11v12h-11zM6 1.5v12M10 1.5v12M2.5 5.5h11M2.5 9.5h11" />
      </IconButton>
      <IconButton label="页面布局" className="w-[38px] max-h-full">
        <LineIcon d="M1.5 1.5h13v12h-13zM4.5 3.5h7v8h-7zM6 5.5h4M6 7.5h4M6 9.5h4" />
      </IconButton>
      <IconButton label="分页预览" className="w-[38px] max-h-full">
        <LineIcon d="M1.5 1.5h13v12h-13zM1.5 8.5h9V1.5M6.5 1.5v7" />
      </IconButton>
      <button aria-label="缩小" className="ml-1 mr-[7px] h-0.5 w-1.5 bg-[#555]" />
      <div className="relative flex h-4 w-[100px] items-center">
        <span className="absolute left-0 right-0 h-px bg-[#aaa]" />
        <span className="absolute left-1/2 h-2 w-px bg-[#999]" />
        <input
          type="range"
          aria-label="缩放"
          min={0}
          max={100}
          defaultValue={62}
          className="relative w-full appearance-none bg-transparent [&::-webkit-slider-thumb]:h-3 [&::-webkit-slider-thumb]:w-1 [&::-webkit-slider-thumb]:appearance-none [&::-webkit-slider-thumb]:bg-[#555]"
        />
      </div>
      <button aria-label="放大" className="ml-1">
        <svg viewBox="0 0 8 8" className="w-2 h-2"><path d="M4 0v8M0 4h8" stroke="#555" strokeWidth="2" /></svg>
      </button>
      <span className="w-[47px] text-right text-[13px]">175%</span>
    </div>
  </footer>
);

export default function App() {
  return (
    <div className="flex h-screen flex-col overflow-hidden bg-[#e6e6e6] font-['Open_Sans','Noto_Sans_CJK_SC',sans-serif] text-[12px] text-[#444]">
      <header className="shrink-0 bg-[#217346]">
        <TitleBar />
        <TabBar />
      </header>
      <div className="flex h-[94px] shrink-0 border-b border-[#d0d0d0] bg-[#f0f0f0]">
        <ClipboardGroup />
        <FontGroup />
        <AlignGroup />
        <NumberGroup />
        <StylesGroup />
        <CellsGroup />
        <EditGroup />
        <button aria-label="折叠功能区" className="ml-auto mr-2.5 self-end pb-1">
          <svg viewBox="0 0 10 8" className="w-2.5 h-2"><path d="M1 6l4-4 4 4" fill="none" stroke="#555" strokeWidth="2" /></svg>
        </button>
      </div>
      <FormulaBar />
      <main className="relative flex min-h-0 flex-1">
        <div className="min-w-0 flex-1 overflow-hidden">
          <Sheet />
        </div>
        <VerticalScroll />
        <Banner />
        <span className="absolute left-[244px] top-[598px] h-14 w-14 rounded-full bg-[#ffff00]/80" />
        <svg viewBox="0 0 16 16" className="absolute left-[264px] top-[618px] h-4 w-4" fill="#fff" stroke="#000" strokeWidth="1.5">
          <path d="M5.5 1h5v4.5H15v5h-4.5V15h-5v-4.5H1v-5h4.5z" />
        </svg>
        <span className="absolute left-[294px] top-[594px] h-[58px] w-[58px] rounded-full border-[5px] border-[#f33]/75 blur-[1px]" />
        <span className="absolute left-[151px] top-[795px] z-10 h-[86px] w-[86px] rounded-full border-[6px] border-[#f66]/35 blur-[1px]" />
      </main>
      <SheetTabs />
      <StatusBar />
    </div>
  );
}
